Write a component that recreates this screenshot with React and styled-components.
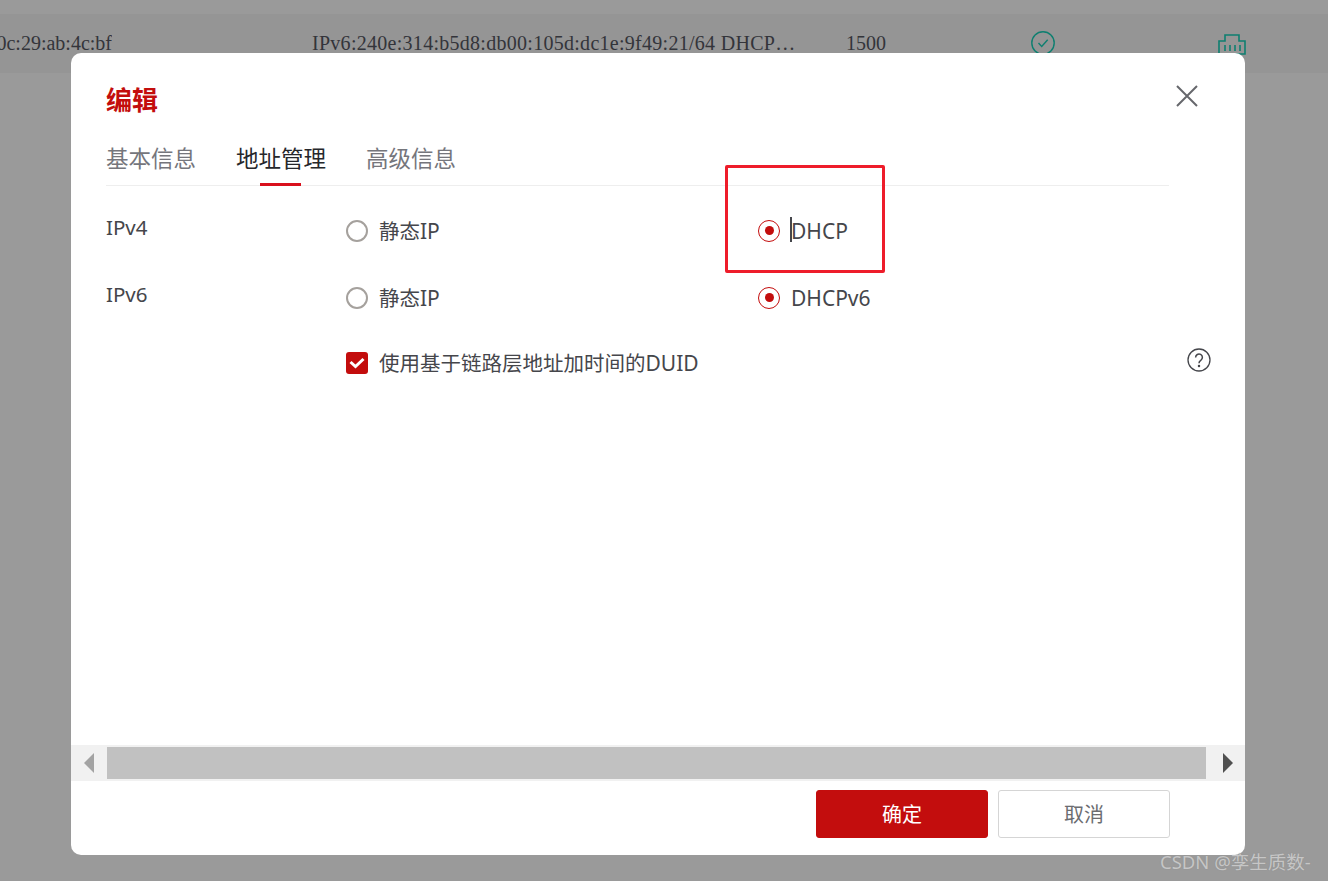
import React from "react";
import styled, { createGlobalStyle } from "styled-components";

const Global = createGlobalStyle`
  html, body { margin: 0; padding: 0; height: 100%; }
  body { overflow: hidden; background: #9a9a9a; }
  #root { height: 881px; }
  * { box-sizing: border-box; }
`;

const Page = styled.div`
  position: relative;
  width: 1328px;
  height: 881px;
  background: #9a9a9a;
  overflow: hidden;
  padding-top: 14px;
`;

const BgRow = styled.div`
  display: grid;
  grid-template-columns: 112px 200px 534px 150px 1fr;
  align-items: center;
  height: 59px;
  padding-bottom: 1px;
  background: #959595;
  color: #33343a;
  font: 20px/28px "Liberation Serif", serif;
`;

const MacCell = styled.div`
  display: flex;
  justify-content: flex-end;
  overflow: hidden;
  white-space: nowrap;
  grid-column: 1;
`;

const AddrCell = styled.div`
  grid-column: 3;
  white-space: nowrap;
  letter-spacing: 0.28px;
`;

const MtuRow = styled.div`
  display: flex;
  align-items: center;
`;

const Dialog = styled.div`
  position: absolute;
  left: 71px;
  top: 53px;
  width: 1174px;
  height: 802px;
  background: #fff;
  border-radius: 10px;
  overflow: hidden;
  display: flex;
  flex-direction: column;
  font-family: "Noto Sans", "Noto Sans CJK SC", sans-serif;
`;

const Content = styled.div`
  flex: 1;
  padding: 29px 76px 0 35px;
`;

const Header = styled.div`
  display: flex;
  justify-content: space-between;
  align-items: flex-start;
`;

const Title = styled.h2`
  margin: 0;
  font: 700 26px/34px "Noto Sans CJK SC", sans-serif;
  color: #c30d0d;
`;

const Close = styled.button`
  border: 0;
  background: none;
  padding: 0;
  margin: 1px -31px 0 0;
  width: 26px;
  height: 26px;
  display: flex;
  color: #66676c;
`;

const Tabs = styled.div`
  display: flex;
  gap: 40px;
  margin-top: 28px;
  height: 42px;
  border-bottom: 1px solid #eeeeee;
`;

const Tab = styled.div`
  position: relative;
  font: 22.5px/26px "Noto Sans CJK SC", sans-serif;
  height: 41px;
  color: ${(p) => (p.$active ? "#26272b" : "#75767c")};
  ${(p) =>
    p.$active &&
    `&::after {
      content: "";
      position: absolute;
      left: 24px;
      bottom: -1px;
      width: 41px;
      height: 3px;
      background: #d9101c;
    }`}
`;

const Form = styled.div`
  position: relative;
  display: grid;
  grid-template-columns: 240px 412px 1fr;
  grid-auto-rows: 67px;
  padding-top: 11px;
  color: #45464b;
  font: 20.5px/30px "Noto Sans CJK SC", sans-serif;
`;

const FieldLabel = styled.div`
  align-self: center;
  margin-top: -8px;
  font: 20.5px/30px "Noto Sans", sans-serif;
`;

const Option = styled.label`
  display: flex;
  align-items: center;
  gap: 11px;
  ${(p) => p.$tight && "height: 62px; margin-top: 1px;"}
`;

const OptionText = styled.span`
  white-space: nowrap;
`;

const CheckText = styled.span`
  white-space: nowrap;
  margin-top: -2px;
`;

const Radio = styled.span`
  position: relative;
  flex: none;
  width: 22px;
  height: 22px;
  border-radius: 50%;
  border: ${(p) => (p.$on ? "1.5px solid #c30d0d" : "2px solid #a5a19d")};
  display: flex;
  align-items: center;
  justify-content: center;
  &::after {
    content: "";
    display: ${(p) => (p.$on ? "block" : "none")};
    width: 9px;
    height: 9px;
    border-radius: 50%;
    background: #c30d0d;
  }
`;

const Box = styled.span`
  flex: none;
  width: 22px;
  height: 22px;
  border-radius: 3px;
  background: #c30d0d;
  display: flex;
  align-items: center;
  justify-content: center;
`;

const LatinText = styled.span`
  font-family: "Noto Sans", sans-serif;
  font-size: 21px;
`;

const Caret = styled.span`
  position: absolute;
  left: -1px;
  top: 2px;
  width: 2px;
  height: 25px;
  background: #45464b;
`;

const CaretWrap = styled.span`
  position: relative;
  display: inline-block;
`;

const Help = styled.span`
  position: absolute;
  right: -42px;
  top: 162px;
  width: 24px;
  height: 24px;
  display: flex;
  color: #45464b;
`;

const ScrollBar = styled.div`
  flex: none;
  display: flex;
  height: 36px;
  padding: 2px 0;
  background: #f1f1f1;
`;

const ScrollBtn = styled.div`
  flex: none;
  width: ${(p) => p.$w}px;
  padding-left: ${(p) => p.$pad || 0}px;
  display: flex;
  align-items: center;
  justify-content: center;
  color: ${(p) => p.$color};
`;

const Thumb = styled.div`
  flex: 1;
  background: #c1c1c1;
`;

const Footer = styled.div`
  flex: none;
  height: 74px;
  padding: 9px 75px 0 0;
  display: flex;
  justify-content: flex-end;
  gap: 10px;
`;

const Button = styled.button`
  width: 172px;
  height: 48px;
  border-radius: 3px;
  border: 1px solid ${(p) => (p.$primary ? "#c30d0d" : "#d5d5d5")};
  background: ${(p) => (p.$primary ? "#c30d0d" : "#fff")};
  color: ${(p) => (p.$primary ? "#fff" : "#6b6c70")};
  font: 20px/28px "Noto Sans CJK SC", sans-serif;
  padding: 0 0 1px;
`;

const Annotation = styled.div`
  position: absolute;
  left: 725px;
  top: 165px;
  width: 160px;
  height: 108px;
  border: 3px solid #ee1c2a;
  border-radius: 2px;
`;

const Watermark = styled.div`
  position: absolute;
  left: 1160px;
  top: 850px;
  font: 18.5px/24px "Noto Sans", "Noto Sans CJK SC", sans-serif;
  color: #c6c6c6;
  white-space: nowrap;
  text-shadow: 0 0 1px #8a8a8a;
`;

const CheckCircle = styled.svg`
  flex: none;
  margin-left: 145px;
`;

const NetPort = styled.svg`
  flex: none;
  margin-left: 222px;
  margin-top: 1px;
`;

export default function App() {
  return (
    <Page>
      <Global />
      <BgRow>
        <MacCell>0c:29:ab:4c:bf</MacCell>
        <AddrCell>IPv6:240e:314:b5d8:db00:105d:dc1e:9f49:21/64 DHCP…</AddrCell>
        <MtuRow>
          1500
          <CheckCircle width="24" height="26" viewBox="0 0 24 26" fill="none" stroke="#0e7f70" strokeWidth="1.4">
            <circle cx="12" cy="13" r="11.2" />
            <path d="M7.5 13l3.2 3.4 6-6.6" />
          </CheckCircle>
        </MtuRow>
        <MtuRow>
          <NetPort width="28" height="24" viewBox="0 0 28 24" fill="none" stroke="#0e7f70" strokeWidth="1.6">
            <path d="M1 22V9h6V3h14v6h6v13z" />
            <path d="M7 13v6M12 13v6M17 13v6M22 13v6" />
          </NetPort>
        </MtuRow>
      </BgRow>

      <Dialog>
        <Content>
          <Header>
            <Title>编辑</Title>
            <Close aria-label="关闭">
              <svg width="26" height="26" viewBox="0 0 26 26" fill="none" stroke="currentColor" strokeWidth="2">
                <path d="M3 3l20 20M23 3L3 23" />
              </svg>
            </Close>
          </Header>
          <Tabs>
            <Tab>基本信息</Tab>
            <Tab $active>地址管理</Tab>
            <Tab>高级信息</Tab>
          </Tabs>
          <Form>
            <FieldLabel>IPv4</FieldLabel>
            <Option><Radio /><OptionText>静态<LatinText>IP</LatinText></OptionText></Option>
            <Option>
              <Radio $on />
              <CaretWrap><Caret /><LatinText>DHCP</LatinText></CaretWrap>
            </Option>
            <FieldLabel>IPv6</FieldLabel>
            <Option><Radio /><OptionText>静态<LatinText>IP</LatinText></OptionText></Option>
            <Option><Radio $on /><LatinText>DHCPv6</LatinText></Option>
            <div />
            <Option $tight>
              <Box>
                <svg width="16" height="12" viewBox="0 0 16 12" fill="none" stroke="#fff" strokeWidth="3">
                  <path d="M1.5 5l5 4.5 8-7.5" />
                </svg>
              </Box>
              <CheckText>使用基于链路层地址加时间的<LatinText>DUID</LatinText></CheckText>
            </Option>
            <Help>
              <svg width="24" height="24" viewBox="0 0 24 24" fill="none" stroke="currentColor" strokeWidth="1.3">
                <circle cx="12" cy="12" r="11" />
                <path d="M8.6 9.4a3.4 3.4 0 1 1 5.2 2.9c-1.2.8-1.8 1.4-1.8 2.9" strokeWidth="1.5" />
                <circle cx="12" cy="18" r="0.6" fill="currentColor" />
              </svg>
            </Help>
          </Form>
        </Content>
        <ScrollBar>
          <ScrollBtn $w={36} $color="#a3a3a3">
            <svg width="10" height="20" viewBox="0 0 10 20" fill="currentColor"><path d="M10 0v20L0 10z" /></svg>
          </ScrollBtn>
          <Thumb />
          <ScrollBtn $w={39} $pad={4} $color="#505050">
            <svg width="10" height="20" viewBox="0 0 10 20" fill="currentColor"><path d="M0 0v20l10-10z" /></svg>
          </ScrollBtn>
        </ScrollBar>
        <Footer>
          <Button $primary>确定</Button>
          <Button>取消</Button>
        </Footer>
      </Dialog>

      <Annotation />
      <Watermark>CSDN @孪生质数-</Watermark>
    </Page>
  );
}
